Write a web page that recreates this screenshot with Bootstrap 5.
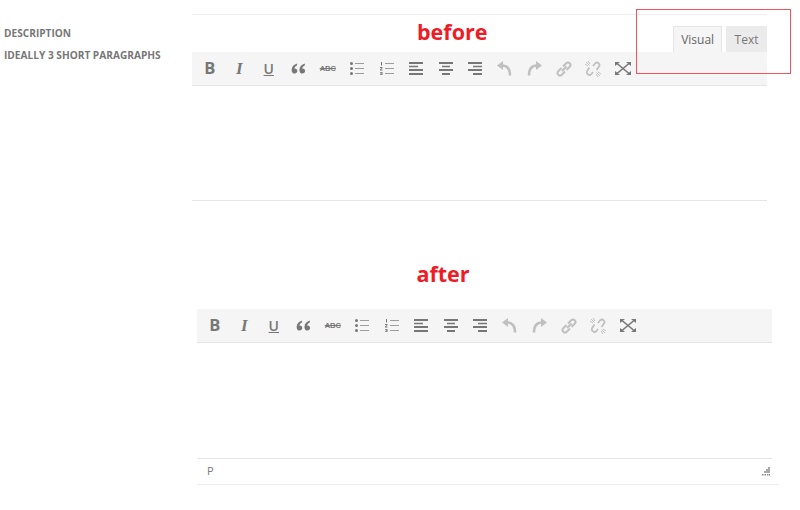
<!DOCTYPE html>
<html lang="en"><head><meta charset="utf-8"><title>Editor</title>
<link href="https://cdn.jsdelivr.net/npm/bootstrap@5.3.0/dist/css/bootstrap.min.css" rel="stylesheet">
<style>
html,body{width:800px;height:510px;overflow:hidden;background:#fff}
body{font-family:"Open Sans","Noto Sans",sans-serif;color:#777;position:relative}
.side-col{width:192px;padding:26px 0 0 4px;flex:none}
.side-label{font-size:10.15px;font-weight:700;line-height:15px;color:#777;margin-bottom:7px;white-space:nowrap}
.main-col{width:575px;flex:none;padding-top:14px}
.head-row{border-top:1px solid #eee;height:38px;padding-top:11px}
.note-red{color:#ee1c25;font-weight:700;font-size:21.5px;line-height:26px;margin:0}
.note-before{margin:-7px 0 0 225px}
.ed-tab{height:26px;font-size:12px;line-height:25px;border:1px solid #e5e5e5;border-bottom:0;padding:0 7px;color:#666;background:#f5f5f5}
.ed-tab-off{background:#ebebeb;color:#777;border-color:#ebebeb;margin-left:4px;padding:0 7.5px}
.tool-bar{height:34px;background:#f5f5f5;border-bottom:1px solid #e5e5e5;padding-left:3px}
.tool-btn{width:29.5px;height:33px;flex:none;color:#777;font-size:16.5px;font-weight:700;line-height:1}
.tool-off{color:#c0c0c0}
.tool-btn svg{display:block;fill:currentColor}
.abc-txt{font-size:7.5px;font-family:"Liberation Sans",sans-serif;text-decoration:line-through}
.under-txt{font-weight:600;text-decoration:underline;font-size:14px}
.ital-txt{font-style:italic;font-family:"Liberation Serif",serif;font-size:17px}
.body-one{height:115px;border-bottom:1px solid #e5e5e5}
.note-after{text-align:center;margin:60px 0 22px;padding-right:73px;height:26px}
.ed-two{width:575px;margin-left:5px}
.body-two{height:115px}
.stat-bar{height:27px;border-top:1px solid #e5e5e5;border-bottom:1px solid #eee;width:582px;font-size:11px;line-height:24px;padding-left:10px;position:relative}
.stat-top-mask{position:absolute;top:-1px;right:0;width:7px;height:1px;background:#fff}
.grip{position:absolute;top:8px;right:9px;display:block}
.red-box{position:absolute;left:636px;top:9px;width:155px;height:65px;border:1px solid #f0555f;pointer-events:none}
</style></head>
<body>
<svg width="0" height="0" class="position-absolute">
<defs>
<symbol id="i-q" viewBox="0 0 16 12"><path d="M6.500.5C3 1.500.5 4 .5 7.500.5 10 2 11.500 3.800 11.500c1.600 0 2.900-1.200 2.900-2.800 0-1.500-1.100-2.700-2.600-2.700-.3 0-.5 0-.7.100.3-1.400 1.400-2.700 3-3.400zM15 .5c-3.500 1-6 3.500-6 7 0 2.500 1.500 4 3.300 4 1.600 0 2.900-1.200 2.900-2.800 0-1.500-1.100-2.700-2.600-2.700-.3 0-.5 0-.7.100.3-1.400 1.400-2.700 3-3.400z"/></symbol>
<symbol id="i-ul" viewBox="0 0 14 13"><circle cx="1.500" cy="1.500" r="1.500"/><circle cx="1.500" cy="6.500" r="1.500"/><circle cx="1.500" cy="11.500" r="1.500"/><path opacity=".7" d="M5 1h9v1H5zM5 6h9v1H5zM5 11h9v1H5z"/></symbol>
<symbol id="i-ol" viewBox="0 0 14 13"><path d="M1 0h1v3.500H1zM0 5h2.500v1L1 7.500h1.500v1H0v-1L1.500 6H0zM0 10h2.500v3H0v-.7h1.500v-.5H.5v-.6h1v-.5H0z"/><path opacity=".7" d="M5 1h9v1H5zM5 6h9v1H5zM5 11h9v1H5z"/></symbol>
<symbol id="i-al" viewBox="0 0 14 13"><path d="M0 0h14v2H0zM0 3.700h9v1.600H0zM0 7h14v2H0zM0 11h14v2H0z"/></symbol>
<symbol id="i-ac" viewBox="0 0 14 13"><path d="M0 0h14v2H0zM3 3.700h8v1.600H3zM0 7h14v2H0zM3 11h8v2H3z"/></symbol>
<symbol id="i-ar" viewBox="0 0 14 13"><path d="M0 0h14v2H0zM5 3.700h9v1.600H5zM0 7h14v2H0zM5 11h9v2H5z"/></symbol>
<symbol id="i-un" viewBox="0 0 15 15"><path d="M0 4.500 6 0v9z"/><path fill="none" stroke="currentColor" stroke-width="2.600" d="M5 4.500c5 0 8 3 8 10"/></symbol>
<symbol id="i-re" viewBox="0 0 15 15"><path d="M15 4.500 9 0v9z"/><path fill="none" stroke="currentColor" stroke-width="2.600" d="M10 4.500c-5 0-8 3-8 10"/></symbol>
<symbol id="i-ln" viewBox="0 0 16 16"><path fill="none" stroke="currentColor" stroke-width="2" d="M6 10 10.500 5.500M5.500 7 2.300 10.200a2.500 2.500 0 0 0 0 3.500 2.500 2.500 0 0 0 3.500 0L9 10.500M7 5.500l3.200-3.200a2.500 2.500 0 0 1 3.500 0 2.500 2.500 0 0 1 0 3.500L10.500 9"/></symbol>
<symbol id="i-ul2" viewBox="0 0 16 16"><path fill="none" stroke="currentColor" stroke-width="1.800" d="M4.500 6.500 2.300 9.700a2.500 2.500 0 0 0 .5 3.500 2.500 2.500 0 0 0 3.500 0L8 11M8 5l2.200-2.700a2.500 2.500 0 0 1 3.500 0 2.500 2.500 0 0 1 0 3.500L11.500 9"/><path fill="none" stroke="currentColor" d="M1 1l3.500 3.500M3 0l2 3M0 3l3 2M15 15l-3.500-3.500M13 16l-2-3M16 13l-3-2"/></symbol>
<symbol id="i-fs" viewBox="0 0 16 13"><path d="M0 0h5L0 4zM16 0h-5L16 4zM0 13h5L0 9zM16 13h-5L16 9z"/><path fill="none" stroke="currentColor" stroke-width="1.600" d="M2 1.500 14 11.500M14 1.500 2 11.500"/></symbol>
</defs></svg>

<div class="d-flex">
  <div class="side-col">
    <div class="side-label">DESCRIPTION</div>
    <div class="side-label">IDEALLY 3 SHORT PARAGRAPHS</div>
  </div>
  <div class="main-col">
    <div class="head-row d-flex align-items-start justify-content-between">
      <p class="note-red note-before">before</p>
      <div class="d-flex">
        <div class="ed-tab">Visual</div>
        <div class="ed-tab ed-tab-off">Text</div>
      </div>
    </div>
    <div class="tool-bar d-flex align-items-center">
      <div class="tool-btn d-flex align-items-center justify-content-center">B</div>
      <div class="tool-btn d-flex align-items-center justify-content-center ital-txt">I</div>
      <div class="tool-btn d-flex align-items-center justify-content-center under-txt">U</div>
      <div class="tool-btn d-flex align-items-center justify-content-center"><svg width="15" height="11"><use href="#i-q"/></svg></div>
      <div class="tool-btn d-flex align-items-center justify-content-center abc-txt">ABC</div>
      <div class="tool-btn d-flex align-items-center justify-content-center"><svg width="14" height="13"><use href="#i-ul"/></svg></div>
      <div class="tool-btn d-flex align-items-center justify-content-center"><svg width="14" height="13"><use href="#i-ol"/></svg></div>
      <div class="tool-btn d-flex align-items-center justify-content-center"><svg width="14" height="13"><use href="#i-al"/></svg></div>
      <div class="tool-btn d-flex align-items-center justify-content-center"><svg width="14" height="13"><use href="#i-ac"/></svg></div>
      <div class="tool-btn d-flex align-items-center justify-content-center"><svg width="14" height="13"><use href="#i-ar"/></svg></div>
      <div class="tool-btn tool-off d-flex align-items-center justify-content-center"><svg width="15" height="15"><use href="#i-un"/></svg></div>
      <div class="tool-btn tool-off d-flex align-items-center justify-content-center"><svg width="15" height="15"><use href="#i-re"/></svg></div>
      <div class="tool-btn tool-off d-flex align-items-center justify-content-center"><svg width="16" height="16"><use href="#i-ln"/></svg></div>
      <div class="tool-btn tool-off d-flex align-items-center justify-content-center"><svg width="16" height="16"><use href="#i-ul2"/></svg></div>
      <div class="tool-btn d-flex align-items-center justify-content-center"><svg width="16" height="13"><use href="#i-fs"/></svg></div>
    </div>
    <div class="body-one"></div>
    <p class="note-red note-after">after</p>
    <div class="ed-two">
      <div class="tool-bar d-flex align-items-center">
        <div class="tool-btn d-flex align-items-center justify-content-center">B</div>
        <div class="tool-btn d-flex align-items-center justify-content-center ital-txt">I</div>
        <div class="tool-btn d-flex align-items-center justify-content-center under-txt">U</div>
        <div class="tool-btn d-flex align-items-center justify-content-center"><svg width="15" height="11"><use href="#i-q"/></svg></div>
        <div class="tool-btn d-flex align-items-center justify-content-center abc-txt">ABC</div>
        <div class="tool-btn d-flex align-items-center justify-content-center"><svg width="14" height="13"><use href="#i-ul"/></svg></div>
        <div class="tool-btn d-flex align-items-center justify-content-center"><svg width="14" height="13"><use href="#i-ol"/></svg></div>
        <div class="tool-btn d-flex align-items-center justify-content-center"><svg width="14" height="13"><use href="#i-al"/></svg></div>
        <div class="tool-btn d-flex align-items-center justify-content-center"><svg width="14" height="13"><use href="#i-ac"/></svg></div>
        <div class="tool-btn d-flex align-items-center justify-content-center"><svg width="14" height="13"><use href="#i-ar"/></svg></div>
        <div class="tool-btn tool-off d-flex align-items-center justify-content-center"><svg width="15" height="15"><use href="#i-un"/></svg></div>
        <div class="tool-btn tool-off d-flex align-items-center justify-content-center"><svg width="15" height="15"><use href="#i-re"/></svg></div>
        <div class="tool-btn tool-off d-flex align-items-center justify-content-center"><svg width="16" height="16"><use href="#i-ln"/></svg></div>
        <div class="tool-btn tool-off d-flex align-items-center justify-content-center"><svg width="16" height="16"><use href="#i-ul2"/></svg></div>
        <div class="tool-btn d-flex align-items-center justify-content-center"><svg width="16" height="13"><use href="#i-fs"/></svg></div>
      </div>
      <div class="body-two"></div>
      <div class="stat-bar">P<span class="stat-top-mask"></span>
        <svg class="grip" width="9" height="9"><path fill="#aaa" d="M7 0h2v2H7zM5 2h2v2H5zM7 2h2v2H7zM3 4h2v2H3zM5 4h2v2H5zM7 4h2v2H7z"/><path fill="#888" d="M1 7h1.500v1.500H1zM3.500 7H5v1.500H3.500zM6 7h1.500v1.500H6zM8 7h1v1.500H8z"/></svg>
      </div>
    </div>
  </div>
</div>
<div class="red-box"></div>
<script src="https://cdn.jsdelivr.net/npm/bootstrap@5.3.0/dist/js/bootstrap.bundle.min.js"></script>
</body></html>
